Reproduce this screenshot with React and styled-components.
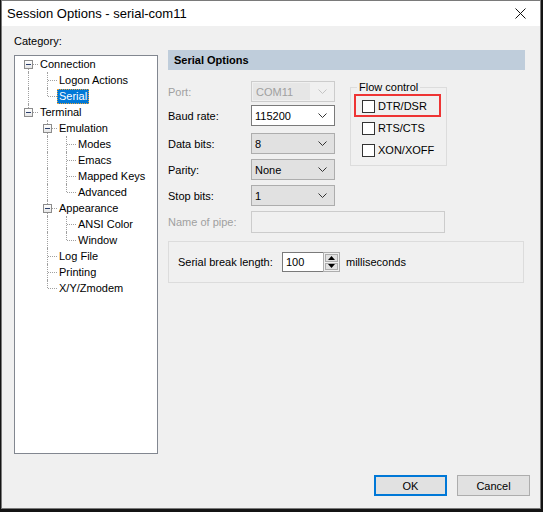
import styled, { createGlobalStyle } from "styled-components";

const GlobalStyle = createGlobalStyle`
  html, body {
    margin: 0;
    padding: 0;
    background: #141414;
  }
  body {
    padding-left: 1px;
    font-family: "Liberation Sans", Arial, sans-serif;
    font-size: 11px;
    color: #000;
  }
`;

const tree = [
  {
    label: "Connection",
    children: [{ label: "Logon Actions" }, { label: "Serial", selected: true }],
  },
  {
    label: "Terminal",
    children: [
      {
        label: "Emulation",
        children: [
          { label: "Modes" },
          { label: "Emacs" },
          { label: "Mapped Keys" },
          { label: "Advanced" },
        ],
      },
      {
        label: "Appearance",
        children: [{ label: "ANSI Color" }, { label: "Window" }],
      },
      { label: "Log File" },
      { label: "Printing" },
      { label: "X/Y/Zmodem" },
    ],
  },
];

// flatten the tree into rows, keeping which ancestor lines continue
const flatten = (nodes, guides = [], depth = 0) =>
  nodes.flatMap((node, i) => {
    const isLast = i === nodes.length - 1;
    const row = {
      ...node,
      guides,
      isLast,
      isFirstRoot: depth === 0 && i === 0,
      hasChildren: !!node.children,
    };
    const kids = node.children
      ? flatten(node.children, [...guides, !isLast], depth + 1)
      : [];
    return [row, ...kids];
  });

const rows = flatten(tree);

const Chevron = ({ color = "#333" }) => (
  <svg width="9" height="5" viewBox="0 0 9 5">
    <path d="M0.5 0.5 L4.5 4.5 L8.5 0.5" fill="none" stroke={color} strokeWidth="1" />
  </svg>
);

export default function App() {
  return (
    <>
      <GlobalStyle />
      <Window>
        <TitleBar>
          <Title>Session Options - serial-com11</Title>
          <CloseButton>
            <svg width="11" height="11" viewBox="0 0 11 11">
              <path d="M0.5 0.5 L10.5 10.5 M10.5 0.5 L0.5 10.5" stroke="#111" strokeWidth="1" />
            </svg>
          </CloseButton>
        </TitleBar>

        <Body>
          <LeftColumn>
            <CategoryLabel>Category:</CategoryLabel>
            <TreePanel>
              {rows.map((row) => (
                <TreeRow key={row.label}>
                  {row.guides.map((line, i) => (
                    <GuideCell key={i} $line={line} />
                  ))}
                  <ConnectorCell $up={!row.isFirstRoot} $down={!row.isLast}>
                    {row.hasChildren && <Expander />}
                  </ConnectorCell>
                  <TreeLabel $selected={row.selected}>{row.label}</TreeLabel>
                </TreeRow>
              ))}
            </TreePanel>
          </LeftColumn>

          <RightPane>
            <SectionHeader>Serial Options</SectionHeader>
            <TopSection>
              <FormColumn>
                <Field $gap={0}>
                  <FieldLabel $disabled>Port:</FieldLabel>
                  <Combo $variant="disabled">
                    <ComboText $variant="disabled">COM11</ComboText>
                    <ComboArrow>
                      <Chevron color="#c4c4c4" />
                    </ComboArrow>
                  </Combo>
                </Field>
                <Field $gap={3}>
                  <FieldLabel>Baud rate:</FieldLabel>
                  <Combo $variant="edit">
                    <ComboText>115200</ComboText>
                    <ComboArrow>
                      <Chevron />
                    </ComboArrow>
                  </Combo>
                </Field>
                <Field $gap={7}>
                  <FieldLabel>Data bits:</FieldLabel>
                  <Combo $variant="list">
                    <ComboText>8</ComboText>
                    <ComboArrow>
                      <Chevron />
                    </ComboArrow>
                  </Combo>
                </Field>
                <Field $gap={5}>
                  <FieldLabel>Parity:</FieldLabel>
                  <Combo $variant="list">
                    <ComboText>None</ComboText>
                    <ComboArrow>
                      <Chevron />
                    </ComboArrow>
                  </Combo>
                </Field>
                <Field $gap={5}>
                  <FieldLabel>Stop bits:</FieldLabel>
                  <Combo $variant="list">
                    <ComboText>1</ComboText>
                    <ComboArrow>
                      <Chevron />
                    </ComboArrow>
                  </Combo>
                </Field>
              </FormColumn>

              <FlowGroup>
                <Legend>Flow control</Legend>
                <CheckList>
                  <CheckRow $marked>
                    <CheckBox />
                    DTR/DSR
                  </CheckRow>
                  <CheckRow>
                    <CheckBox />
                    RTS/CTS
                  </CheckRow>
                  <CheckRow>
                    <CheckBox />
                    XON/XOFF
                  </CheckRow>
                </CheckList>
              </FlowGroup>
            </TopSection>

            <PipeRow>
              <FieldLabel $disabled>Name of pipe:</FieldLabel>
              <PipeInput />
            </PipeRow>

            <GroupBox>
              <BreakLabel>Serial break length:</BreakLabel>
              <Spinner>
                <SpinInput>100</SpinInput>
                <SpinButtons>
                  <SpinButton>
                    <svg width="7" height="4" viewBox="0 0 7 4">
                      <path d="M0 4 L3.5 0 L7 4 Z" fill="#000" />
                    </svg>
                  </SpinButton>
                  <SpinButton>
                    <svg width="7" height="4" viewBox="0 0 7 4">
                      <path d="M0 0 L3.5 4 L7 0 Z" fill="#000" />
                    </svg>
                  </SpinButton>
                </SpinButtons>
              </Spinner>
              <Unit>milliseconds</Unit>
            </GroupBox>
          </RightPane>
        </Body>

        <Footer>
          <DialogButton $default>OK</DialogButton>
          <DialogButton>Cancel</DialogButton>
        </Footer>
      </Window>
    </>
  );
}

const Window = styled.div`
  width: 540px;
  height: 509px;
  box-sizing: border-box;
  border: 1px solid #7a7a7a;
  background: #f0f0f0;
  display: flex;
  flex-direction: column;
`;

const TitleBar = styled.div`
  height: 25px;
  background: #fff;
  display: flex;
  align-items: center;
  justify-content: space-between;
  padding-left: 5px;
`;

const Title = styled.div`
  font-size: 13px;
  color: #000;
`;

const CloseButton = styled.div`
  width: 40px;
  height: 25px;
  display: flex;
  align-items: center;
  justify-content: center;
`;

const Body = styled.div`
  flex: 1;
  display: flex;
  gap: 10px;
  padding-left: 12px;
`;

const LeftColumn = styled.div`
  width: 144px;
  display: flex;
  flex-direction: column;
`;

const CategoryLabel = styled.div`
  margin-top: 8px;
  line-height: 15px;
`;

const TreePanel = styled.div`
  margin-top: 6px;
  height: 399px;
  box-sizing: border-box;
  border: 1px solid #828790;
  background: #fff;
  padding-left: 4px;
`;

const TreeRow = styled.div`
  display: flex;
  align-items: center;
  height: 16px;
`;

const GuideCell = styled.div`
  width: 19px;
  height: 16px;
  flex: none;
  position: relative;
  &::before {
    content: "";
    display: ${(p) => (p.$line ? "block" : "none")};
    position: absolute;
    left: 9px;
    top: 0;
    bottom: 0;
    border-left: 1px dotted #a0a0a0;
  }
`;

const ConnectorCell = styled.div`
  width: 19px;
  height: 16px;
  flex: none;
  position: relative;
  &::before {
    content: "";
    position: absolute;
    left: 9px;
    top: ${(p) => (p.$up ? "0" : "8px")};
    bottom: ${(p) => (p.$down ? "0" : "8px")};
    border-left: 1px dotted #a0a0a0;
  }
  &::after {
    content: "";
    position: absolute;
    left: 10px;
    right: 0;
    top: 8px;
    border-top: 1px dotted #a0a0a0;
  }
`;

const Expander = styled.div`
  position: absolute;
  left: 5px;
  top: 4px;
  width: 9px;
  height: 9px;
  box-sizing: border-box;
  border: 1px solid #8c8c8c;
  background: linear-gradient(#fff, #e6e6e6);
  z-index: 1;
  &::after {
    content: "";
    position: absolute;
    left: 1px;
    right: 1px;
    top: 3px;
    border-top: 1px solid #2b3f6b;
  }
`;

const TreeLabel = styled.div`
  height: 15px;
  line-height: 13px;
  box-sizing: border-box;
  padding: 0 1px;
  white-space: nowrap;
  border: 1px ${(p) => (p.$selected ? "dotted #e9a23b" : "solid transparent")};
  background: ${(p) => (p.$selected ? "#0078d7" : "transparent")};
  color: ${(p) => (p.$selected ? "#fff" : "#000")};
`;

const RightPane = styled.div`
  width: 357px;
  margin-top: 24px;
  display: flex;
  flex-direction: column;
`;

const SectionHeader = styled.div`
  height: 20px;
  line-height: 20px;
  background: #bfcddb;
  padding-left: 6px;
  font-weight: bold;
`;

const TopSection = styled.div`
  display: flex;
  align-items: flex-start;
`;

const FormColumn = styled.div`
  width: 167px;
  margin-top: 11px;
  display: flex;
  flex-direction: column;
`;

const Field = styled.div`
  display: grid;
  grid-template-columns: 83px 84px;
  align-items: center;
  margin-top: ${(p) => p.$gap}px;
`;

const FieldLabel = styled.div`
  color: ${(p) => (p.$disabled ? "#a0a0a0" : "#000")};
  white-space: nowrap;
`;

const comboStyles = {
  disabled: "border-color: #cccccc; background: #f0f0f0;",
  edit: "border-color: #7a7a7a; background: #fff;",
  list: "border-color: #adadad; background: #e1e1e1;",
};

const Combo = styled.div`
  height: 21px;
  box-sizing: border-box;
  border: 1px solid;
  ${(p) => comboStyles[p.$variant]}
  display: flex;
  align-items: center;
`;

const ComboText = styled.div`
  flex: 1;
  align-self: stretch;
  display: flex;
  align-items: center;
  padding-left: 3px;
  margin: ${(p) => (p.$variant === "disabled" ? "1px 0 1px 1px" : "0")};
  background: ${(p) => (p.$variant === "disabled" ? "#e6e6e6" : "transparent")};
  color: ${(p) => (p.$variant === "disabled" ? "#a0a0a0" : "#000")};
`;

const ComboArrow = styled.div`
  width: 24px;
  display: flex;
  align-items: center;
  justify-content: center;
`;

const FlowGroup = styled.fieldset`
  margin: 10px 0 0 15px;
  width: 97px;
  height: 86px;
  box-sizing: border-box;
  border: 1px solid #dcdcdc;
  padding: 4px 0 0 11px;
  min-width: 0;
`;

const Legend = styled.legend`
  padding: 0 2px;
  margin-left: -5px;
  line-height: 14px;
`;

const CheckList = styled.div`
  display: flex;
  flex-direction: column;
  gap: 6px;
`;

const CheckRow = styled.div`
  position: relative;
  width: 79px;
  height: 16px;
  display: flex;
  align-items: center;
  gap: 3px;
  &::after {
    content: "";
    display: ${(p) => (p.$marked ? "block" : "none")};
    position: absolute;
    left: -8px;
    right: 0;
    top: -4px;
    bottom: -3px;
    border: 2px solid #ee3434;
  }
`;

const CheckBox = styled.span`
  width: 13px;
  height: 13px;
  box-sizing: border-box;
  border: 1px solid #333;
  background: #fff;
  flex: none;
`;

const PipeRow = styled.div`
  display: grid;
  grid-template-columns: 83px 194px;
  align-items: center;
  margin-top: 5px;
`;

const PipeInput = styled.div`
  height: 22px;
  box-sizing: border-box;
  border: 1px solid #cccccc;
  background: #f0f0f0;
`;

const GroupBox = styled.div`
  margin-top: 8px;
  width: 356px;
  height: 42px;
  box-sizing: border-box;
  border: 1px solid #dcdcdc;
  padding-left: 9px;
  display: flex;
  align-items: center;
`;

const BreakLabel = styled.div`
  width: 104px;
  white-space: nowrap;
`;

const Spinner = styled.div`
  display: flex;
  height: 20px;
`;

const SpinInput = styled.div`
  width: 41px;
  box-sizing: border-box;
  border: 1px solid #7a7a7a;
  border-right: none;
  background: #fff;
  padding-left: 3px;
  display: flex;
  align-items: center;
`;

const SpinButtons = styled.div`
  width: 17px;
  box-sizing: border-box;
  border: 1px solid #adadad;
  background: #f0f0f0;
  display: flex;
  flex-direction: column;
  gap: 1px;
  padding: 1px;
`;

const SpinButton = styled.div`
  flex: 1;
  border: 1px solid #adadad;
  background: #e1e1e1;
  display: flex;
  align-items: center;
  justify-content: center;
`;

const Unit = styled.div`
  margin-left: 6px;
`;

const Footer = styled.div`
  display: flex;
  justify-content: flex-end;
  gap: 10px;
  padding: 0 10px 12px 0;
`;

const DialogButton = styled.button`
  width: 73px;
  height: 21px;
  box-sizing: border-box;
  font-family: "Liberation Sans", Arial, sans-serif;
  font-size: 11px;
  color: #000;
  background: #e1e1e1;
  border: ${(p) => (p.$default ? "2px solid #0078d7" : "1px solid #adadad")};
  padding: 0;
`;
